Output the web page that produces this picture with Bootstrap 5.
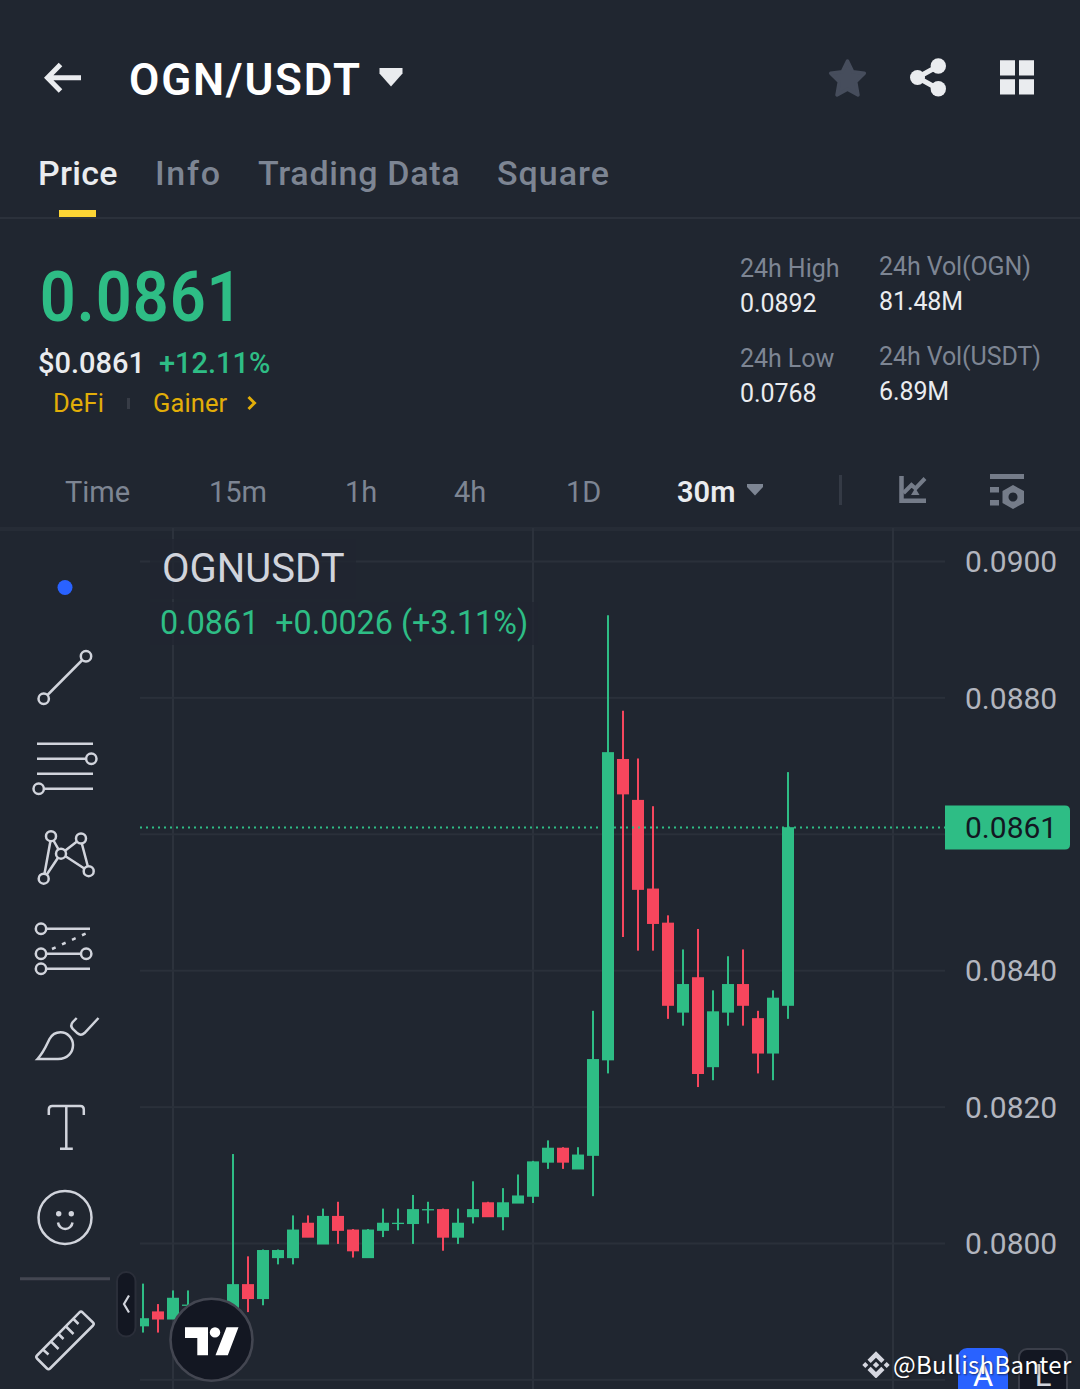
<!DOCTYPE html>
<html lang="en">
<head>
<meta charset="utf-8">
<meta name="viewport" content="width=device-width, initial-scale=1">
<title>OGN/USDT</title>
<link href="https://cdn.jsdelivr.net/npm/bootstrap@5.3.0/dist/css/bootstrap.min.css" rel="stylesheet">
<style>
  :root { --bg:#202630; --up:#2ebd85; --down:#f6465d; --txt:#eaecef; --dim:#7d8593; --line:#2b313b; --icon:#d1d4dc; }
  body { background:var(--bg); color:var(--txt); font-family:Roboto,"Liberation Sans",sans-serif; }
  .app { width:1080px; height:1389px; }
  svg { display:block; flex:none; }
  .top-bar { height:156px; padding:0 46px 0 44px; }
  .pair { font-size:44px; font-weight:600; line-height:44px; letter-spacing:1.8px; color:#fff; margin:3px 0 0 47px; }
  .tabs-bar { height:63px; border-bottom:2px solid var(--line); padding-left:38px; }
  .tabs-bar .nav-link { padding:0; height:61px; line-height:34px; font-size:34px; font-weight:500; color:var(--dim); letter-spacing:.4px; width:117px; white-space:nowrap; }
  .tabs-bar .nav-link.active { color:var(--txt); letter-spacing:.3px; }
  .tabs-bar .tab-info { letter-spacing:1.7px; width:103px; }
  .tabs-bar .tab-data { letter-spacing:.7px; width:239px; }
  .tabs-bar .tab-square { letter-spacing:1px; }
  .tabs-bar .nav-link.active::after { content:""; position:absolute; left:21px; bottom:0; width:37px; height:7.5px; background:#fcd535; }
  .summary { height:239px; padding:0 38px; }
  .last-price { font-size:70px; line-height:88px; font-weight:600; color:var(--up); letter-spacing:1.1px; padding-left:2px; transform:scaleX(.9); transform-origin:0 0; }
  .fiat { font-size:29px; line-height:44px; font-weight:500; gap:14px; }
  .up { color:var(--up); }
  .chips { font-size:25.500px; line-height:36px; color:#e2ae08; padding-left:15px; letter-spacing:.1px; }
  .chip-sep { width:3px; height:11px; background:#373c46; margin:0 23px; }
  .stat { font-size:25px; line-height:35px; white-space:nowrap; }
  .stat + .stat { margin-top:20px; }
  .stat span { color:var(--dim); display:block; }
  .stats-a { width:139px; padding-top:32px; letter-spacing:-.05px; }
  .stats-b { width:163px; padding-top:30px; letter-spacing:-.1px; }
  .intervals { display:grid; grid-template-columns:144px 136px 109px 112px 110px 163px 60px 90px auto; height:69px; padding-left:65px; align-items:center; font-size:29px; color:var(--dim); }
  .intervals .on { color:var(--txt); font-weight:600; gap:12px; padding-left:1px; }
  .v-sep { width:3px; height:30px; background:#343a45; margin-top:-5px; }
  .chart-area { height:862px; border-top:4px solid #262c36; }
  .tools { width:140px; padding-top:11px; }
  .tools svg { fill:none; stroke:var(--icon); stroke-width:2.5; }
  .legend-box { left:150px; top:8px; }
  .legend-box div { background:rgba(32,38,48,.75); white-space:pre; width:max-content; }
  .sym { font-size:40px; line-height:60px; height:60px; color:var(--icon); padding:0 11px 0 12px; }
  .chg { font-size:32.3px; line-height:43px; margin-top:3px; color:var(--up); padding:0 10px; }
  .axis { font-size:30px; fill:#b2b5be; }
  .collapse-btn { left:116px; top:740px; }
  .scale-btn { top:817px; width:50px; height:60px; border-radius:9px; font-size:31px; line-height:55px; text-align:center; }
  .auto-btn { left:958px; background:#2962ff; color:#fff; }
  .log-btn { left:1018px; background:#131722; border:2px solid #3a3e49; color:var(--icon); line-height:51px; }
  .credit { left:862px; top:815px; font-family:"Noto Sans CJK SC",sans-serif; font-size:24px; letter-spacing:.3px; line-height:36px; color:#fff; text-shadow:1px 1px 2px rgba(0,0,0,.55); gap:3px; }
</style>
<script src="https://cdn.jsdelivr.net/npm/bootstrap@5.3.0/dist/js/bootstrap.bundle.min.js"></script>
</head>
<body class="overflow-hidden">
<div class="app overflow-hidden">
  <header class="top-bar d-flex align-items-center">
    <svg width="38" height="32" viewBox="44 62 38 32" fill="none" stroke="#eaecef" stroke-width="5"><path d="M81 77.800H48M60.500 64.500L47.500 77.800L60.500 91"/></svg>
    <h1 class="pair mb-0">OGN/USDT</h1>
    <svg class="ms-3" width="26" height="20" viewBox="378 68 26 20" fill="#eaecef"><path d="M379.500 68H402.500V73.500L391 86.500L379.500 73.500Z"/></svg>
    <div class="d-flex align-items-center ms-auto">
      <svg width="206" height="44" viewBox="828 56 206 44" fill="#eaecef">
        <path d="M847.500 61L852.700 71.800L864.300 73.300L855.700 81.800L858 95L847.500 89.300L837 95L839.300 81.800L830.700 73.300L842.300 71.800Z" fill="#464d5c" stroke="#464d5c" stroke-width="3.500" stroke-linejoin="round"/>
        <path d="M938.300 66L917.500 77.500L938.300 89" fill="none" stroke="#eaecef" stroke-width="5"/>
        <circle cx="917.500" cy="77.500" r="7.500"/><circle cx="938.300" cy="66" r="7.700"/><circle cx="938.300" cy="88.700" r="7.700"/>
        <path d="M1000 60.300h15v15.200h-15zM1019 60.300h15v15.200h-15zM1000 79.300h15v15.200h-15zM1019 79.300h15v15.200h-15z"/>
      </svg>
    </div>
  </header>

  <nav class="nav tabs-bar flex-nowrap">
    <a class="nav-link active position-relative">Price</a>
    <a class="nav-link tab-info">Info</a>
    <a class="nav-link tab-data">Trading Data</a>
    <a class="nav-link tab-square">Square</a>
  </nav>

  <section class="summary d-flex">
    <div class="me-auto" style="padding-top:34px">
      <div class="last-price">0.0861</div>
      <div class="fiat d-flex"><span>$0.0861</span><span class="up">+12.11%</span></div>
      <div class="chips d-flex align-items-center">
        <span>DeFi</span><i class="chip-sep"></i><span>Gainer</span>
        <svg width="14" height="16" viewBox="242 395 14 16" class="ms-3" fill="none" stroke="#e2ae08" stroke-width="3"><path d="M247.500 397L253.500 403L247.500 409"/></svg>
      </div>
    </div>
    <div class="stats-a">
      <div class="stat"><span>24h High</span>0.0892</div>
      <div class="stat"><span>24h Low</span>0.0768</div>
    </div>
    <div class="stats-b">
      <div class="stat"><span>24h Vol(OGN)</span>81.48M</div>
      <div class="stat"><span>24h Vol(USDT)</span>6.89M</div>
    </div>
  </section>

  <div class="intervals">
    <span>Time</span><span>15m</span><span>1h</span><span>4h</span><span>1D</span>
    <span class="on d-flex align-items-center">30m<svg width="16" height="18" viewBox="747 484 16 18" fill="#7d8593"><path d="M747 483.500H763V487L755 495.500L747 487Z"/></svg></span>
    <i class="v-sep"></i>
    <svg width="28" height="34" viewBox="899 476 28 34" fill="none" stroke="#757c89" stroke-width="4.500"><path d="M901.500 476V500.800H926"/><path d="M903.500 493L911.500 485L915.500 488.500L925 478.500" stroke-width="4"/><path d="M915.300 488L919.500 495H911Z" fill="#757c89" stroke="none"/></svg>
    <svg width="36" height="38" viewBox="989 474 36 38" fill="#757c89"><path d="M990 473.500h34v5.500h-34zM990 487h9v5.500h-9zM990 500h9v5.500h-9z"/><path fill-rule="evenodd" d="M1013 485L1024 491V503L1013 509L1002.500 503V491ZM1013 492.500a4.500 4.500 0 1 0 .01 0Z"/></svg>
  </div>

  <main class="chart-area d-flex position-relative">
    <aside class="tools d-flex flex-column">
      <svg width="140" height="90" viewBox="0 542 140 90"><circle cx="65" cy="587.500" r="7.500" fill="#2962ff" stroke="none"/></svg>
      <svg width="140" height="90" viewBox="0 632 140 90"><circle cx="43.700" cy="698.700" r="5.200"/><circle cx="86" cy="656.300" r="5.200"/><path d="M47.500 695L82.300 660"/></svg>
      <svg width="140" height="90" viewBox="0 722 140 90"><path d="M37 743.700H93M37 758.700H86M37 773.700H93M44 788.700H93"/><circle cx="91.300" cy="758.700" r="5.200"/><circle cx="38.700" cy="788.700" r="5.200"/></svg>
      <svg width="140" height="90" viewBox="0 812 140 90"><circle cx="51" cy="836.200" r="5"/><circle cx="81" cy="838.500" r="5"/><circle cx="61" cy="853.700" r="5"/><circle cx="88.700" cy="871.200" r="5"/><circle cx="43.700" cy="878.700" r="5"/><path d="M50.400 841.200L44.500 873.700M53.500 840.500L58.500 849.300M46.800 874.500L58 857.800M65 850.700L77 841.500M65.500 856.200L84.300 868.500M81.800 843.500L87.800 866.200"/></svg>
      <svg width="140" height="90" viewBox="0 902 140 90"><circle cx="41" cy="928.700" r="5.200"/><circle cx="41" cy="953.700" r="5.200"/><circle cx="86.200" cy="953.700" r="5.200"/><circle cx="41" cy="968.700" r="5.200"/><path d="M46.500 928.700H90M46.500 953.700H81M46.500 968.700H90"/><path d="M52 949L88 932.500" stroke-dasharray="4 7"/></svg>
      <svg width="140" height="90" viewBox="0 992 140 90"><path d="M37.500 1059C44 1052 47 1044 49.500 1039C52 1034.500 56 1032.300 60.500 1032.300C67.500 1032.300 73 1038 73 1045C73 1052 68 1059 58 1059Z"/><path d="M76.700 1018L72.800 1022Q69.800 1025.500 72.800 1028.800L77.500 1033.300Q81 1036.200 84.500 1033L98.500 1018"/></svg>
      <svg width="140" height="90" viewBox="0 1082 140 90"><path d="M48.800 1115V1109.500Q48.800 1106 52.300 1106H80.300Q83.800 1106 83.800 1109.500V1115M66.300 1106V1148.500M60 1148.700H72.800"/></svg>
      <svg width="140" height="90" viewBox="0 1172 140 90"><circle cx="65" cy="1217.500" r="26.500"/><path d="M58 1222.500A7.300 7.300 0 0 0 72.500 1222.500"/><g fill="#d1d4dc" stroke="none"><circle cx="58.700" cy="1213.700" r="2.700"/><circle cx="71.300" cy="1213.700" r="2.700"/></g></svg>
      <svg width="140" height="127" viewBox="0 1262 140 127"><path d="M20 1278.800H110" stroke="#434651" stroke-width="3"/><path stroke-linejoin="round" d="M79.500 1312.300Q81 1311 82.500 1312.300L93 1322.500Q94.500 1324 93 1325.500L50 1368.500Q48.500 1370 47 1368.500L37 1358.500Q35.500 1357 37 1355.500Z"/><path d="M43.500 1350L48.500 1354.500M51 1341.500L58.500 1349M58.500 1334L63.500 1339M66 1326.500L73.500 1334M73.500 1319L78.500 1324"/></svg>
    </aside>

    <svg id="plot" width="940" height="862" viewBox="140 527 940 862" style="margin-top:-4px"></svg>

    <div class="legend-box position-absolute">
      <div class="sym">OGNUSDT</div>
      <div class="chg">0.0861  +0.0026 (+3.11%)</div>
    </div>

    <svg class="collapse-btn position-absolute" width="22" height="67" viewBox="116 1271 22 67"><rect x="117" y="1272" width="18.500" height="64.500" rx="9" fill="#131722" stroke="#2a2e39" stroke-width="2"/><path d="M129 1295.500L124 1304L129 1312.500" fill="none" stroke="#d1d4dc" stroke-width="2.200"/></svg>
    <div class="scale-btn auto-btn position-absolute">A</div>
    <div class="scale-btn log-btn position-absolute">L</div>
    <div class="credit position-absolute d-flex align-items-center">
      <svg width="28" height="28" viewBox="862 1350 28 28" fill="#d5d7e0"><path d="M876 1351.300L884.500 1359.800L881.300 1363L876 1357.700L870.700 1363L867.500 1359.800ZM876 1378.500L884.500 1370L881.300 1366.800L876 1372.100L870.700 1366.800L867.500 1370ZM865.300 1361.900l3 3l-3 3l-3-3zM886.700 1361.900l3 3l-3 3l-3-3zM876 1361.700l3.200 3.200l-3.200 3.200l-3.200-3.200z"/></svg>
      <span>@BullishBanter</span>
    </div>
  </main>
</div>

<script>
  // 30-minute candles in units of 0.0001: [open, high, low, close]
  const candles = [
    [788,794,787,789],[790,791,787,789],[789,793,789,792],[791,793,790,791],[790,791,788,789],[788,791,788,790],
    [789,813,789,794],[794,798,790,792],[792,799,791,799],[798,799,797,799],[798,804,797,802],[803,804,801,801],
    [800,805,800,804],[804,806,800,802],[802,802,798,799],[798,802,798,802],[802,805,801,803],[803,805,802,803],
    [803,807,800,805],[805,806,803,805],[805,805,799,801],[801,805,800,803],[804,809,803,805],[806,806,804,804],
    [804,808,802,806],[806,810,806,807],[807,812,806,812],[812,815,811,814],[814,814,811,812],[811,814,811,813],
    [813,834,807,827],[827,892,825,872],[871,878,845,866],[865,871,843,852],[852,864,843,847],[847,848,833,835],
    [834,843,832,838],[839,846,823,825],[826,837,824,834],[834,842,832,838],[838,843,832,835],[833,834,825,828],
    [828,837,824,836],[835,869,833,861]
  ];
  const y = p => 561.5 + (900 - p) * 6.82;
  let s = '';
  for (const x of [173, 533, 893]) s += `<rect x="${x - 1}" y="528" width="2" height="861" fill="#2c323c"/>`;
  for (const p of [900, 880, 860, 840, 820, 800, 780]) {
    s += `<rect x="140" y="${y(p) - 1}" width="805" height="2" fill="#2a303a"/>`;
    if (p !== 860 && p !== 780) s += `<text class="axis" x="965" y="${y(p) + 10.7}">0.0${p}</text>`;
  }
  candles.forEach(([o, h, l, c], i) => {
    const x = 143 + i * 15, col = c < o ? '#f6465d' : '#2ebd85';
    const t = y(Math.max(o, c)) - .3, b = y(Math.min(o, c)) + 1;
    s += `<g fill="${col}"><rect x="${x - 1}" y="${y(h) - .8}" width="2" height="${y(l) - y(h) + 1.2}"/><rect x="${x - 6}" y="${t}" width="12" height="${b - t}"/></g>`;
  });
  s += `<path d="M140 827.500H945" stroke="#2ebd85" stroke-width="2" stroke-dasharray="2 4"/>
    <path d="M945 805.500H1065Q1070 805.500 1070 810.500V844.500Q1070 849.500 1065 849.500H945Z" fill="#2ebd85"/>
    <text class="axis" x="965" y="838.300" style="fill:#131722">0.0861</text>
    <circle cx="211.500" cy="1339.700" r="41" fill="#131722" stroke="#434651" stroke-width="2.600"/>
    <path d="M185 1327.300H208V1355.300H197.300V1338H185ZM226.500 1327.300H238.500L227.800 1355.300H215.500Z" fill="#fff"/><circle cx="215" cy="1332.400" r="5.200" fill="#fff"/>`;
  document.getElementById('plot').innerHTML = s;
</script>
</body>
</html>
